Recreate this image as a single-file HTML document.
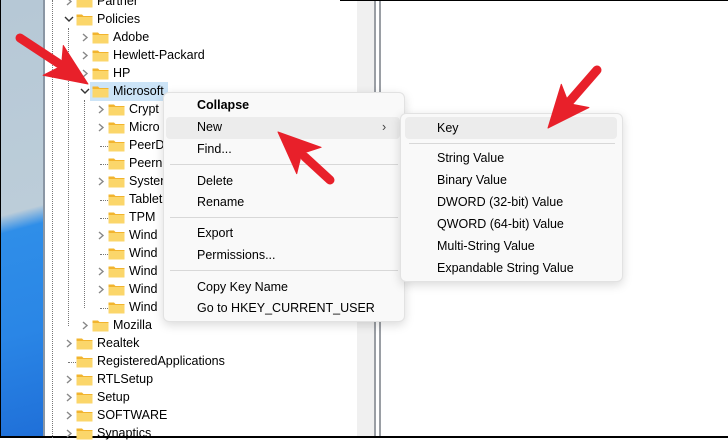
<!DOCTYPE html>
<html><head><meta charset="utf-8"><style>
*{margin:0;padding:0;box-sizing:border-box}
body{width:728px;height:438px;overflow:hidden;background:#fff;font-family:"Liberation Sans",sans-serif;font-size:12.5px;color:#000;position:relative}
.wall{position:absolute;left:0;top:0;width:45px;height:438px;background:linear-gradient(165deg,#b6c8d6 0%,#bccdd9 48%,#2f8ee8 52%,#2a86e6 75%,#1f6fd8 100%);border-left:1px solid #000}
.wall:after{content:"";position:absolute;right:0;top:0;width:2px;height:100%;background:#8a96a4}
.row{position:absolute;height:18px;line-height:18px;white-space:nowrap}
.row svg{position:absolute}
.row span{position:absolute;top:0}
.dv{position:absolute;border-left:1px dotted #777;width:0}
.menu{position:absolute;background:#f9f9f9;border:1px solid #e2e2e2;border-radius:6px;box-shadow:0 3px 10px rgba(0,0,0,.15);font-size:12.5px}
.mi{position:absolute;left:0;height:22px;line-height:22px;white-space:nowrap}
.sep{position:absolute;height:1px;background:#d8d8d8}
.hl{position:absolute;background:#ececec;border-radius:4px}
</style></head><body>
<div class="wall"></div>
<div style="position:absolute;left:357px;top:0;width:17px;height:438px;background:#f0f0f0"></div>
<div style="position:absolute;left:374px;top:0;width:2px;height:438px;background:#9a9ea4"></div>
<div style="position:absolute;left:379px;top:0;width:2px;height:438px;background:#9a9ea4"></div>
<div style="position:absolute;left:340px;top:0;width:388px;height:1px;background:#000"></div>
<div style="position:absolute;left:0;top:436px;width:728px;height:2px;background:#000"></div>
<div style="position:absolute;left:90px;top:82px;width:78px;height:19px;background:#cce4f7"></div>
<div class="dv" style="left:52px;top:0;height:438px"></div>
<div class="dv" style="left:68px;top:28px;height:298px"></div>
<div class="dv" style="left:84px;top:100px;height:208px"></div>
<div id="tree"></div>
<div class="menu" style="left:163px;top:92px;width:242px;height:230px">
<div class="hl" style="left:2px;top:24px;width:234px;height:22px"></div>
<div class="mi" style="left:33px;top:1px;font-weight:bold">Collapse</div>
<div class="mi" style="left:33px;top:23px">New</div>
<div class="mi" style="left:218px;top:23px;color:#444">›</div>
<div class="mi" style="left:33px;top:45px">Find...</div>
<div class="sep" style="left:6px;top:71px;width:228px"></div>
<div class="mi" style="left:33px;top:77px">Delete</div>
<div class="mi" style="left:33px;top:98px">Rename</div>
<div class="sep" style="left:6px;top:124px;width:228px"></div>
<div class="mi" style="left:33px;top:129px">Export</div>
<div class="mi" style="left:33px;top:151px">Permissions...</div>
<div class="sep" style="left:6px;top:177px;width:228px"></div>
<div class="mi" style="left:33px;top:183px">Copy Key Name</div>
<div class="mi" style="left:33px;top:204px">Go to HKEY_CURRENT_USER</div>
</div>
<div class="menu" style="left:400px;top:113px;width:223px;height:169px">
<div class="hl" style="left:4px;top:3px;width:212px;height:22px"></div>
<div class="mi" style="left:36px;top:3px">Key</div>
<div class="sep" style="left:8px;top:29px;width:206px"></div>
<div class="mi" style="left:36px;top:33px">String Value</div>
<div class="mi" style="left:36px;top:55px">Binary Value</div>
<div class="mi" style="left:36px;top:77px">DWORD (32-bit) Value</div>
<div class="mi" style="left:36px;top:99px">QWORD (64-bit) Value</div>
<div class="mi" style="left:36px;top:121px">Multi-String Value</div>
<div class="mi" style="left:36px;top:143px">Expandable String Value</div>
</div>
<svg style="position:absolute;left:0;top:0" width="728" height="438">
<g fill="#e8202a" stroke="#e8202a" stroke-linecap="round" stroke-linejoin="round">
<line x1="20" y1="38" x2="58" y2="63" stroke-width="9"/>
<polygon stroke-width="1" points="88,84 43.1,75.3 61.5,66 63.3,45.5"/>
<line x1="330" y1="180" x2="305" y2="157" stroke-width="9"/>
<polygon stroke-width="1" points="278,132 321.1,147.3 301.5,153.7 296.7,173.7"/>
<line x1="597" y1="70" x2="570" y2="101" stroke-width="9"/>
<polygon stroke-width="1" points="548,128 561.3,84.3 568.7,103.6 588.9,107.5"/>
</g></svg>
<script>
var F='<svg style="left:12px;top:3px" width="17" height="13" viewBox="0 0 17 13"><path d="M0.5 1.5h5.5l1.5 1.5h9v9.5h-16z" fill="#f2b42e"/><path d="M0.5 4h16v8.5h-16z" fill="#fbd66a"/></svg>';
var R='<svg style="left:1px;top:5px" width="8" height="9" viewBox="0 0 8 9"><path d="M2 1l4 3.5L2 8" fill="none" stroke="#888" stroke-width="1.4"/></svg>';
var D='<svg style="left:0;top:6px" width="10" height="7" viewBox="0 0 10 7"><path d="M1 1l4 4 4-4" fill="none" stroke="#333" stroke-width="1.4"/></svg>';
var rows=[[0,'Partner',1,'r'],[0,'Policies',19,'d'],[1,'Adobe',37,'r'],[1,'Hewlett-Packard',55,'r'],[1,'HP',73,'r'],[1,'Microsoft',91,'d'],
[2,'Crypt',109,'r'],[2,'Micro',127,'r'],[2,'PeerD',145,''],[2,'Peern',163,''],[2,'Syster',181,'r'],[2,'Tablet',199,''],[2,'TPM',217,''],
[2,'Wind',235,'r'],[2,'Wind',253,''],[2,'Wind',271,'r'],[2,'Wind',289,'r'],[2,'Wind',307,''],[1,'Mozilla',325,'r'],
[0,'Realtek',343,'r'],[0,'RegisteredApplications',361,''],[0,'RTLSetup',379,'r'],[0,'Setup',397,'r'],[0,'SOFTWARE',415,'r'],[0,'Synaptics',433,'r']];
var h='';rows.forEach(function(r){var x=64+r[0]*16,y=r[2]-9;
h+='<div class="row" style="left:'+x+'px;top:'+y+'px">';
if(r[3]=='r')h+=R;else if(r[3]=='d')h+=D;
else h+='<span style="left:4px;top:10px;width:8px;border-top:1px dotted #777;height:0"></span>';
h+=F+'<span style="left:33px">'+r[1]+'</span></div>';});
document.getElementById('tree').innerHTML=h;
</script>
</body></html>
